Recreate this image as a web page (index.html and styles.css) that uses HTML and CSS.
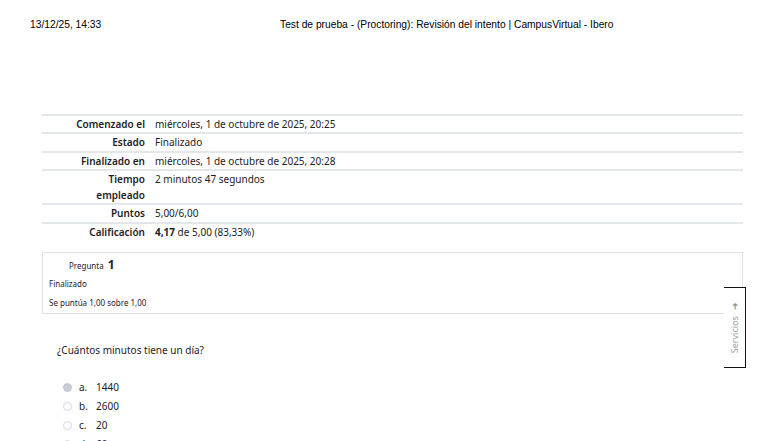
FILE: index.html
```html
<!DOCTYPE html>
<html lang="es">
<head>
<meta charset="utf-8">
<title>Test de prueba - (Proctoring): Revisión del intento | CampusVirtual - Ibero</title>
<link rel="stylesheet" href="styles.css">
</head>
<body>
<header class="print-head">
  <span class="print-date">13/12/25, 14:33</span>
  <span class="print-title">Test de prueba - (Proctoring): Revisión del intento | CampusVirtual - Ibero</span>
</header>
<main class="page">
  <table class="summary">
    <tbody>
      <tr><th>Comenzado el</th><td>miércoles, 1 de octubre de 2025, 20:25</td></tr>
      <tr><th>Estado</th><td>Finalizado</td></tr>
      <tr><th>Finalizado en</th><td>miércoles, 1 de octubre de 2025, 20:28</td></tr>
      <tr><th>Tiempo<br>empleado</th><td>2 minutos 47 segundos</td></tr>
      <tr><th>Puntos</th><td>5,00/6,00</td></tr>
      <tr><th>Calificación</th><td><b>4,17</b> de 5,00 (83,33%)</td></tr>
    </tbody>
  </table>

  <section class="question">
    <div class="qinfo">
      <div class="qno">Pregunta <span class="qnum">1</span></div>
      <div class="qstate">Finalizado</div>
      <div class="qgrade">Se puntúa 1,00 sobre 1,00</div>
    </div>
    <div class="qtext">¿Cuántos minutos tiene un día?</div>
    <div class="answers">
      <div class="answer"><span class="radio checked"></span><span class="letter">a.</span><span>1440</span></div>
      <div class="answer"><span class="radio"></span><span class="letter">b.</span><span>2600</span></div>
      <div class="answer"><span class="radio"></span><span class="letter">c.</span><span>20</span></div>
      <div class="answer"><span class="radio"></span><span class="letter">d.</span><span>60</span></div>
    </div>
  </section>
</main>
<aside class="services">
  <span class="services-label">Servicios <span class="services-arrow">➜</span></span>
</aside>
</body>
</html>
```

FILE: styles.css
```css
html, body {
  margin: 0;
  padding: 0;
  background: #fff;
}
body {
  font-family: "Noto Sans", "Open Sans", sans-serif;
  color: #1d2125;
  width: 784px;
  height: 441px;
  overflow: hidden;
  position: relative;
}
.print-head {
  display: flex;
  font-family: "Liberation Sans", Arial, sans-serif;
  font-size: 10.25px;
  color: #000;
  padding: 19px 0 0 30px;
  height: 12px;
  line-height: 12px;
}
.print-date {
  width: 250px;
}
.page {
  padding: 83px 41px 0 42px;
}
.summary {
  width: 100%;
  border-collapse: collapse;
  font-size: 10px;
  line-height: 16.25px;
}
.summary th,
.summary td {
  border-top: 2px solid #e4e7ea;
  padding: 0;
  vertical-align: top;
}
.summary th {
  width: 103px;
  text-align: right;
  font-weight: 600;
  padding-right: 10px;
}
.summary td {
  font-weight: 400;
}
.summary b {
  font-weight: 700;
}
.question {
  margin-top: 12px;
}
.qinfo {
  border: 1px solid #dfe3e7;
  height: 62px;
  padding: 0 6px;
  box-sizing: border-box;
  font-size: 8px;
  color: #1d2125;
}
.qno {
  padding-left: 20px;
  padding-top: 4px;
  height: 15px;
  line-height: 15px;
}
.qnum {
  font-size: 12px;
  font-weight: 700;
  margin-left: 2px;
}
.qstate {
  margin-top: 6px;
  line-height: 12px;
}
.qgrade {
  margin-top: 7px;
  line-height: 12px;
}
.qtext {
  font-size: 10px;
  padding: 28px 0 0 15px;
  line-height: 16px;
}
.answers {
  padding: 20px 0 0 21px;
  font-size: 10px;
}
.answer {
  display: flex;
  align-items: center;
  height: 19px;
}
.radio {
  width: 7px;
  height: 7px;
  border: 1px solid #d3d6da;
  border-radius: 50%;
  margin-right: 7px;
  box-sizing: content-box;
}
.radio.checked {
  background: #c9ccd0;
  border-color: #c2c5c9;
}
.letter {
  width: 17px;
}
.services {
  position: absolute;
  left: 724px;
  top: 287px;
  width: 21px;
  height: 79px;
  background: #fff;
  border: 1px solid #111;
  border-left: none;
  display: flex;
  align-items: center;
  justify-content: center;
}
.services-label {
  transform: rotate(-90deg);
  white-space: nowrap;
  font-size: 9px;
  color: #9aa0a6;
  font-family: "Noto Sans", sans-serif;
}
.services-arrow {
  margin-left: 4px;
  color: #8a8f94;
}
```
